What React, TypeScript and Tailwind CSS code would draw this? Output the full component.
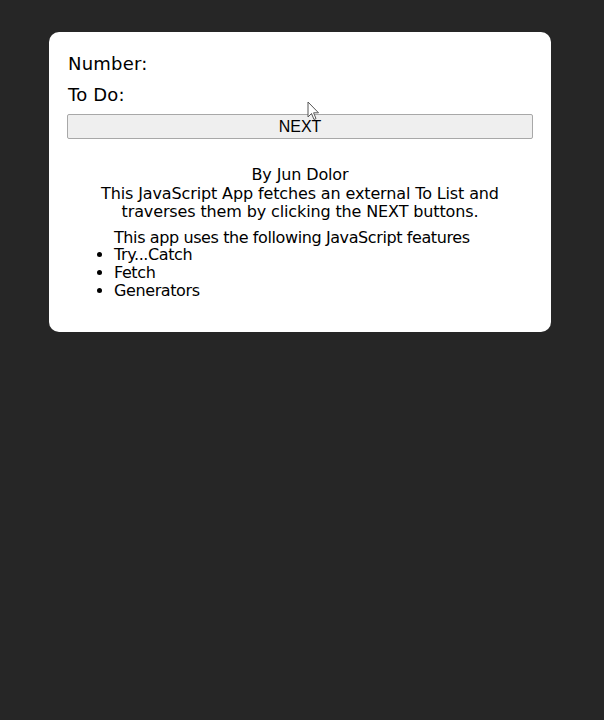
import React from "react";

export default function App() {
  return (
    <div className="min-h-[720px] w-full bg-[#262626] pt-[32px] relative" style={{ fontFamily: '"DejaVu Sans", Verdana, sans-serif' }}>
      <div className="mx-[49px] w-[502px] bg-white rounded-[10px] px-[18px] pt-[21px] pb-[33px] text-black">
        <div className="text-[18px] leading-[21px] pl-[1px] tracking-[0.2px]">Number:</div>
        <div className="text-[18px] leading-[21px] mt-[10px] pl-[1px] tracking-[0.2px]">To Do:</div>
        <button
          className="mt-[9px] w-full h-[25px] bg-[#efefef] border border-[#a8a8a8] rounded-[2px] text-[16px] leading-[18px] text-black"
          style={{ fontFamily: '"Liberation Sans", Arial, sans-serif' }}
        >
          NEXT
        </button>
        <div className="mt-[27px] text-[16px] leading-[18.6px] text-center tracking-[-0.13px]">
          <div>By Jun Dolor</div>
          <div className="px-[16px]">This JavaScript App fetches an external To List and traverses them by clicking the NEXT buttons.</div>
        </div>
        <div className="mt-[7px] ml-[47px] text-[16px] leading-[17.6px] tracking-[-0.4px]">
          <div>This app uses the following JavaScript features</div>
          <ul className="list-disc">
            <li>Try...Catch</li>
            <li>Fetch</li>
            <li>Generators</li>
          </ul>
        </div>
      </div>
      <svg className="absolute left-[307px] top-[101px]" width="13" height="20" viewBox="0 0 13 20">
        <path d="M1 1 L1 16 L4.5 12.5 L7 18.5 L9 17.6 L6.6 11.8 L11.5 11.8 Z" fill="white" stroke="#555" strokeWidth="1" strokeLinejoin="round" />
      </svg>
    </div>
  );
}
